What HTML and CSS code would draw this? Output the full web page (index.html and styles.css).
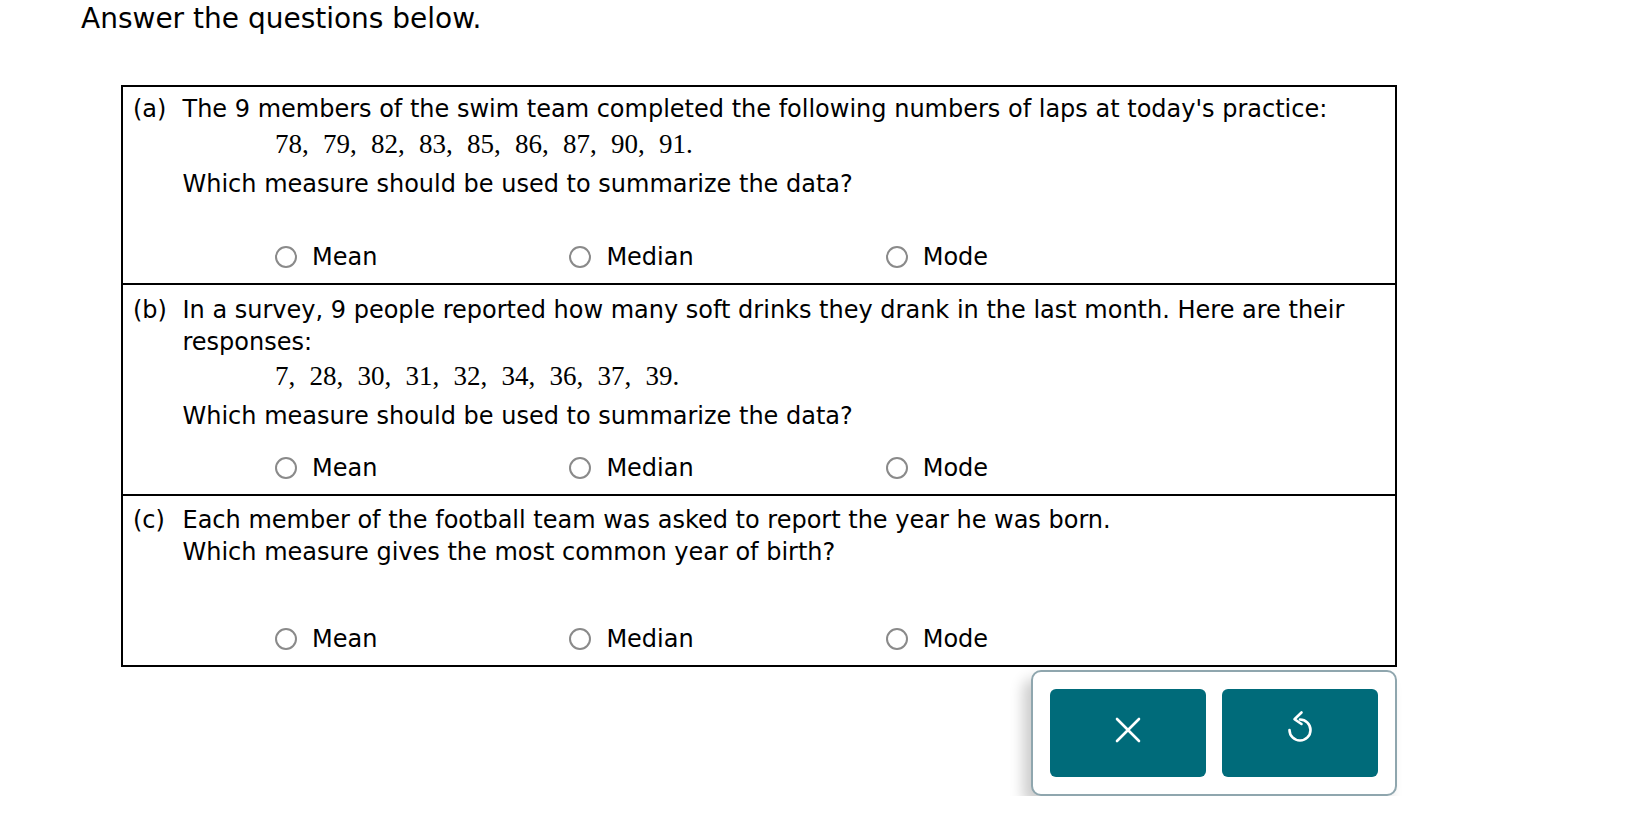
FILE: index.html
```html
<!DOCTYPE html>
<html lang="en">
<head>
<meta charset="utf-8">
<title>Answer the questions below.</title>
<link rel="stylesheet" href="styles.css">
</head>
<body>
<div class="title">Answer the questions below.</div>
<div class="table">
  <div class="q q-a">
    <div class="lbl">(a)</div>
    <div class="body">
      <div class="txt">The 9 members of the swim team completed the following numbers of laps at today's practice:</div>
      <div class="nums">78, 79, 82, 83, 85, 86, 87, 90, 91.</div>
      <div class="txt ask">Which measure should be used to summarize the data?</div>
      <div class="choices">
        <div class="choice"><span class="radio"></span><span>Mean</span></div>
        <div class="choice"><span class="radio"></span><span>Median</span></div>
        <div class="choice"><span class="radio"></span><span>Mode</span></div>
      </div>
    </div>
  </div>
  <div class="q q-b">
    <div class="lbl">(b)</div>
    <div class="body">
      <div class="txt">In a survey, 9 people reported how many soft drinks they drank in the last month. Here are their<br>responses:</div>
      <div class="nums">7, 28, 30, 31, 32, 34, 36, 37, 39.</div>
      <div class="txt ask">Which measure should be used to summarize the data?</div>
      <div class="choices">
        <div class="choice"><span class="radio"></span><span>Mean</span></div>
        <div class="choice"><span class="radio"></span><span>Median</span></div>
        <div class="choice"><span class="radio"></span><span>Mode</span></div>
      </div>
    </div>
  </div>
  <div class="q q-c">
    <div class="lbl">(c)</div>
    <div class="body">
      <div class="txt">Each member of the football team was asked to report the year he was born.<br>Which measure gives the most common year of birth?</div>
      <div class="choices">
        <div class="choice"><span class="radio"></span><span>Mean</span></div>
        <div class="choice"><span class="radio"></span><span>Median</span></div>
        <div class="choice"><span class="radio"></span><span>Mode</span></div>
      </div>
    </div>
  </div>
</div>
<div class="panel">
  <button class="btn" aria-label="Clear">
    <svg class="ico-x" width="26" height="26" viewBox="0 0 26 26"><path d="M2 2 L24 24 M24 2 L2 24" fill="none" stroke="#fff" stroke-width="2.6" stroke-linecap="round"/></svg>
  </button>
  <button class="btn" aria-label="Undo">
    <svg class="ico-undo" width="40" height="40" viewBox="0 0 40 40"><path d="M20 10.5 A10.5 10.5 0 1 1 9.5 21" fill="none" stroke="#fff" stroke-width="2.6" stroke-linecap="round"/><path d="M21.5 3.5 L14.5 10.2 L21.5 15" fill="none" stroke="#fff" stroke-width="2.6" stroke-linecap="round" stroke-linejoin="round"/></svg>
  </button>
</div>
</body>
</html>
```
FILE: styles.css
```css
body {
  margin: 0;
  background: #fff;
  color: #000;
  font-family: "DejaVu Sans", Verdana, sans-serif;
}

.title {
  font-size: 28px;
  line-height: 36px;
  padding-top: 1px;
  padding-left: 81px;
}

.table {
  margin: 48px 0 0 121px;
  width: 1276px;
  box-sizing: border-box;
  border: 2px solid #000;
}

.q {
  display: flex;
  padding: 0 10px 10px;
  font-size: 24px;
  line-height: 32px;
}

.q + .q {
  border-top: 2px solid #000;
}

.q-a { padding-top: 6px; }
.q-b { padding-top: 9px; }
.q-c { padding-top: 8px; }

.lbl {
  flex: none;
  width: 49.5px;
}

.body {
  flex: 1;
}

.nums {
  font-family: "Liberation Serif", "Times New Roman", serif;
  font-size: 27px;
  line-height: 36px;
  padding-left: 92.5px;
  word-spacing: 7.5px;
}

.q-a .nums { margin-top: 1px; }

.ask { margin-top: 6px; }

.choices {
  display: flex;
  align-items: center;
  gap: 192px;
  height: 32px;
  padding-left: 92.5px;
}

.q-a .choices { margin-top: 41px; }
.q-b .choices { margin-top: 20px; }
.q-c .choices { margin-top: 55px; }

.choice {
  display: flex;
  align-items: center;
  gap: 15px;
}

.radio {
  width: 18px;
  height: 18px;
  border: 2px solid #8a8a8a;
  border-radius: 50%;
}

.panel {
  margin: 3px 0 0 1031px;
  width: 366px;
  box-sizing: border-box;
  border: 2px solid #8fa6ae;
  border-radius: 10px;
  padding: 17px;
  display: flex;
  gap: 16px;
  background: #fff;
  box-shadow: -8px 9px 14px rgba(0, 0, 0, 0.2);
}

.btn {
  width: 156px;
  height: 88px;
  padding: 0;
  border: none;
  border-radius: 6px;
  background: #006b7a;
  display: flex;
  align-items: center;
  justify-content: center;
}

.ico-x { margin-top: -6px; }
.ico-undo { margin-top: -8px; }
```
